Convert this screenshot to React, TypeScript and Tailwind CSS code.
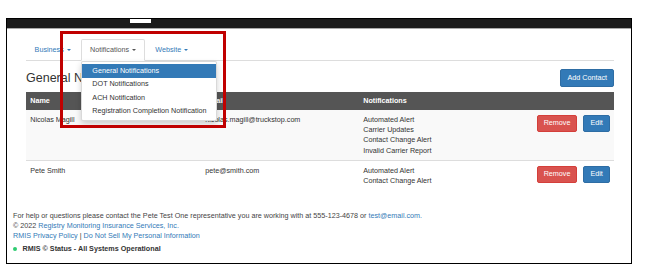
import React from 'react';

const rows = [
  {
    name: 'Nicolas Magill',
    email: 'nicolas.magill@truckstop.com',
    alerts: ['Automated Alert', 'Carrier Updates', 'Contact Change Alert', 'Invalid Carrier Report'],
  },
  {
    name: 'Pete Smith',
    email: 'pete@smith.com',
    alerts: ['Automated Alert', 'Contact Change Alert'],
  },
];

const menu = ['General Notifications', 'DOT Notifications', 'ACH Notification', 'Registration Completion Notification'];

const Caret = () => (
  <span className="ml-[1px] inline-block align-middle w-0 h-0 border-t-[2.2px] border-t-current border-x-[2.2px] border-x-transparent" />
);

const Btn = ({ label, tone }: { label: string; tone: 'blue' | 'red' }) => (
  <button
    className={`px-[6px] py-[2.6px] leading-[10.4px] text-white rounded-[2px] border ${
      tone === 'blue' ? 'bg-[#337ab7] border-[#2e6da4]' : 'bg-[#d9534f] border-[#d43f3a]'
    }`}
  >
    {label}
  </button>
);

export default function App() {
  return (
    <div className="bg-white w-[652px] h-[277px] pt-[18px] font-['Liberation_Sans',Arial,sans-serif] text-[7.2px] leading-[10.4px] text-[#333]">
      <div className="relative ml-[6px] w-[626px] h-[246px] border border-black">
        <div className="h-[10px] bg-[#1c1c1c] border-b border-[#aaa] flex">
          <div className="ml-[123px] w-[21px] h-[4px] bg-white" />
        </div>

        <div className="pl-[19px] pr-[17px]">
          <ul className="mt-[10px] flex border-b border-[#ddd]">
            <li className="mr-[2px] -mb-px">
              <a className="block px-[7.6px] py-[5px] border border-transparent text-[#337ab7]">
                Business <Caret />
              </a>
            </li>
            <li className="relative mr-[2px] -mb-px">
              <a className="block px-[7.6px] py-[5px] border border-[#ddd] border-b-transparent rounded-t-[2px] bg-white text-[#555]">
                Notifications <Caret />
              </a>
              <div className="absolute left-0 top-full z-10 w-[136px] py-[2px] bg-white border border-black/15 rounded-[2px] shadow-[0_3px_6px_rgba(0,0,0,0.18)]">
                {menu.map((m, i) => (
                  <div
                    key={m}
                    className={`px-[10px] py-[1.5px] whitespace-nowrap ${i === 0 ? 'bg-[#337ab7] text-white' : 'text-[#333]'}`}
                  >
                    {m}
                  </div>
                ))}
              </div>
            </li>
            <li className="mr-[2px] -mb-px">
              <a className="block px-[7.6px] py-[5px] border border-transparent text-[#337ab7]">
                Website <Caret />
              </a>
            </li>
          </ul>

          <div className="mt-[7.6px] mb-[5px] flex justify-between items-start">
            <h3 className="mt-[2.75px] text-[12.5px] leading-[13.75px] text-[#333]">General Notifications</h3>
            <Btn label="Add Contact" tone="blue" />
          </div>

          <div>
            <div className="flex bg-[#555] text-white font-bold">
              <div className="w-[175px] p-[4.2px]">Name</div>
              <div className="w-[158px] p-[4.2px]">Email</div>
              <div className="flex-1 p-[4.2px]">Notifications</div>
            </div>
            {rows.map((r, i) => (
              <div key={r.name} className={`flex ${i === 0 ? 'bg-[#f9f9f9]' : 'bg-white border-t border-[#ddd]'}`}>
                <div className="w-[175px] p-[4.2px]">{r.name}</div>
                <div className="w-[158px] p-[4.2px]">{r.email}</div>
                <div className="flex-1 p-[4.2px]">
                  {r.alerts.map((a) => (
                    <div key={a}>{a}</div>
                  ))}
                </div>
                <div className="p-[4.2px] flex items-start gap-[6px]">
                  <Btn label="Remove" tone="red" />
                  <Btn label="Edit" tone="blue" />
                </div>
              </div>
            ))}
          </div>
        </div>

        <div className="pl-[6px] mt-[20px] text-[#444]">
          <div>
            For help or questions please contact the Pete Test One representative you are working with at 555-123-4678 or{' '}
            <span className="text-[#337ab7]">test@email.com.</span>
          </div>
          <div>
            © 2022 <span className="text-[#337ab7]">Registry Monitoring Insurance Services, Inc.</span>
          </div>
          <div>
            <span className="text-[#337ab7]">RMIS Privacy Policy</span> <span className="text-[#333]">|</span>{' '}
            <span className="text-[#337ab7]">Do Not Sell My Personal Information</span>
          </div>
          <div className="mt-[2px] flex items-center gap-[6px] font-bold text-[#333]">
            <span className="w-[3.6px] h-[3.6px] rounded-full bg-[#2ecc71]" />
            RMIS © Status - All Systems Operational
          </div>
        </div>

        <div className="absolute left-[53px] top-[12px] w-[166px] h-[97px] border-[3px] border-[#c00000] pointer-events-none z-20" />
      </div>
    </div>
  );
}
